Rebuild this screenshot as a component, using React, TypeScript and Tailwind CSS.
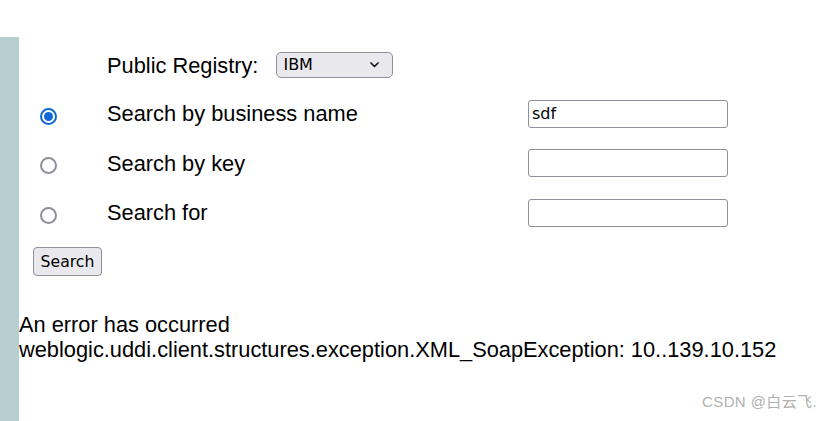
import React from "react";

const ctrlFont = { fontFamily: '"DejaVu Sans", Verdana, sans-serif' } as React.CSSProperties;

function Radio({ checked }: { checked?: boolean }) {
  if (checked) {
    return (
      <span className="w-[17px] h-[17px] rounded-full border-[2px] border-[#1068d8] flex items-center justify-center bg-white">
        <span className="w-[9px] h-[9px] rounded-full bg-[#1068d8]" />
      </span>
    );
  }
  return <span className="w-[17px] h-[17px] rounded-full border-[2px] border-[#8f8f9a] bg-white" />;
}

function TextBox({ value }: { value?: string }) {
  return (
    <div
      className="w-[200px] h-[28px] border border-[#8f8f9d] rounded-[3px] bg-white flex items-center pl-[3px] text-[16px] text-black"
      style={ctrlFont}
    >
      {value}
    </div>
  );
}

function Row({ checked, label, value }: { checked?: boolean; label: string; value?: string }) {
  return (
    <div className="h-[49.5px] flex items-center">
      <div className="w-[88px] pl-[21px] pt-[5px] flex items-center">
        <Radio checked={checked} />
      </div>
      <div className="w-[421px] text-[21.8px] leading-[25px] text-black">{label}</div>
      <TextBox value={value} />
    </div>
  );
}

export default function App() {
  return (
    <div
      className="w-[828px] h-[421px] bg-white relative overflow-hidden"
      style={{ fontFamily: '"Liberation Sans", Arial, sans-serif' }}
    >
      <div className="h-[37px]" />
      <div className="flex h-[384px]">
        <div className="w-[19px] shrink-0 bg-[#b8cfd1]" />
        <div className="flex-1 flex flex-col pt-[4px]">
          <div className="h-[48px] flex items-center">
            <div className="w-[88px]" />
            <div className="text-[21.8px] leading-[25px] text-black">Public Registry:</div>
            <div
              className="ml-[18px] w-[117px] h-[26px] border border-[#8f8f9d] rounded-[5px] bg-[#e9e9ed] flex items-center justify-between pl-[6px] pr-[13px] text-[16px] text-black"
              style={ctrlFont}
            >
              <span>IBM</span>
              <svg width="9" height="6" viewBox="0 0 9 6" fill="none">
                <path d="M1 1l3.5 3.5L8 1" stroke="#1a1a1a" strokeWidth="1.7" strokeLinecap="round" strokeLinejoin="round" />
              </svg>
            </div>
          </div>
          <Row checked label="Search by business name" value="sdf" />
          <Row label="Search by key" />
          <Row label="Search for" />
          <div className="mt-[9.5px] ml-[14px]">
            <div
              className="w-[69px] h-[29px] border border-[#8f8f9d] rounded-[4px] bg-[#e9e9ed] flex items-center justify-center text-[15.7px] text-black"
              style={ctrlFont}
            >
              Search
            </div>
          </div>
          <div className="mt-[36px] text-[21.8px] leading-[25px] text-black">
            <div>An error has occurred</div>
            <div>weblogic.uddi.client.structures.exception.XML_SoapException: 10..139.10.152</div>
          </div>
        </div>
      </div>
      <div
        className="absolute left-[702px] top-[392px] text-[15px] leading-[20px] text-[#b0b0b0] tracking-[0.4px]"
        style={{ fontFamily: '"Liberation Sans", "Noto Sans CJK SC", sans-serif' }}
      >
        CSDN @白云飞.
      </div>
    </div>
  );
}
